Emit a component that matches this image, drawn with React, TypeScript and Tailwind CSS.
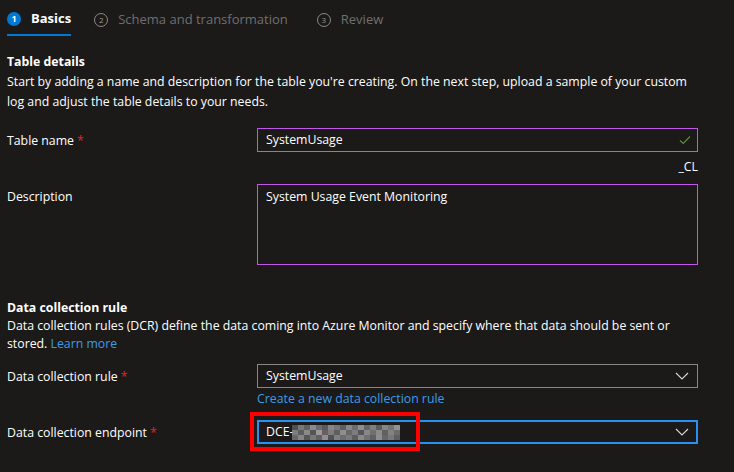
import React from 'react';

const font = { fontFamily: '"Open Sans", "Noto Sans", Arial, sans-serif' };

const blur = [
  ['#5a5a5a', '#8a8a8a', '#6e6e6e', '#a0a0a0', '#7a7a85', '#666', '#9a9a9a', '#888', '#6a6a70', '#9b9b9b', '#7c7c7c', '#a5a5a5', '#737373', '#909090', '#686868', '#999', '#858585', '#a8a8a8'],
  ['#8f8f8f', '#6a6a6a', '#9d9d9d', '#5f5f68', '#b0b0b0', '#7a6a70', '#909090', '#6c6c6c', '#a3a3a3', '#777', '#8e8e95', '#616161', '#9c9c9c', '#7f7f7f', '#a0a0a0', '#6d6d6d', '#959595', '#7b7b7b'],
  ['#777', '#9a9a9a', '#626262', '#8a8a8a', '#6f6f6f', '#a6a6a6', '#5d5d5d', '#939393', '#7c7c7c', '#8c8c8c', '#6a6a6a', '#9e9e9e', '#818181', '#6e6e6e', '#a2a2a2', '#747474', '#8a8a8a', '#6b6b6b'],
];

const Chevron = () => (
  <svg width="14" height="8" viewBox="0 0 14 8" className="shrink-0">
    <path d="M1 1 L7 7 L13 1" fill="none" stroke="#d6d6d6" strokeWidth="1.1" />
  </svg>
);

const Step = ({ n, label, active }: { n: number; label: string; active?: boolean }) => (
  <div
    className={
      'flex items-center gap-[10px] h-[36px] pt-[3px] ' +
      (active ? 'border-b-[2px] border-[#0078d4]' : '')
    }
  >
    {active ? (
      <span className="w-[14px] h-[14px] rounded-full bg-[#0078d4] text-white text-[9px] font-bold flex items-center justify-center leading-none">
        {n}
      </span>
    ) : (
      <span className="w-[14px] h-[14px] rounded-full border border-[#8a8a8a] text-[#9a9a9a] text-[8px] flex items-center justify-center leading-none">
        {n}
      </span>
    )}
    <span className={active ? 'text-[13px] font-bold text-white' : 'text-[13px] text-[#6f6f6f]'}>
      {label}
    </span>
  </div>
);

const Req = () => <span className="text-[#e3242b] ml-[3px]">*</span>;

export default function App() {
  return (
    <div
      className="w-[734px] h-[472px] bg-[#1b1a19] text-white text-[12.3px] overflow-hidden relative"
      style={font}
    >
      {/* wizard steps */}
      <div className="flex pl-[7px]">
        <Step n={1} label="Basics" active />
        <div className="ml-[23px]">
          <Step n={2} label="Schema and transformation" />
        </div>
        <div className="ml-[29px]">
          <Step n={3} label="Review" />
        </div>
      </div>

      <div className="px-[7px]">
        {/* Table details */}
        <div className="mt-[16px] leading-[20px]">
          <div className="font-bold">Table details</div>
          <p className="whitespace-nowrap">
            Start by adding a name and description for the table you're creating. On the next step, upload a sample of your custom
            <br />
            log and adjust the table details to your needs.
          </p>
        </div>

        <div className="mt-[16px] grid grid-cols-[250px_441px]">
          <div className="leading-[24px] pt-[1px]">
            Table name<Req />
          </div>
          <div>
            <div className="h-[24px] border border-[#c157e8] flex items-center justify-between pl-[8px] pr-[6px]">
              <span>SystemUsage</span>
              <svg width="12" height="10" viewBox="0 0 12 10">
                <path d="M1 5.5 L4.2 8.5 L11 1.5" fill="none" stroke="#5f8f3c" strokeWidth="1.1" />
              </svg>
            </div>
            <div className="text-right leading-[20px] mt-[5px]">_CL</div>
          </div>

          <div className="mt-[7px] leading-[24px] pt-[1px]">Description</div>
          <div className="mt-[7px] h-[81px] border border-[#c157e8] px-[8px] pt-[2px] leading-[20px]">
            System Usage Event Monitoring
          </div>
        </div>

        {/* Data collection rule */}
        <div className="mt-[34px] leading-[18px]">
          <div className="font-bold">Data collection rule</div>
          <p className="whitespace-nowrap">
            Data collection rules (DCR) define the data coming into Azure Monitor and specify where that data should be sent or
            <br />
            stored. <span className="text-[#3b9ae8]">Learn more</span>
          </p>
        </div>

        <div className="mt-[11px] grid grid-cols-[250px_441px]">
          <div className="leading-[24px] pt-[1px]">
            Data collection rule<Req />
          </div>
          <div>
            <div className="h-[24px] border border-[#8a8886] flex items-center justify-between pl-[8px] pr-[8px]">
              <span>SystemUsage</span>
              <Chevron />
            </div>
            <div className="text-[#3b9ae8] leading-[19px] mt-[1px]">Create a new data collection rule</div>
          </div>

          <div className="mt-[12px] leading-[24px] pt-[1px]">
            Data collection endpoint<Req />
          </div>
          <div className="mt-[12px] h-[24px] border-[2px] border-[#2a8ff0] flex items-center justify-between pl-[7px] pr-[7px]">
            <span className="flex items-center">
              DCE-
              <svg width="108" height="15" viewBox="0 0 108 15" className="ml-[-1px]">
                {blur.map((row, r) =>
                  row.map((c, i) => (
                    <rect key={r + '-' + i} x={i * 6} y={r * 5} width="6" height="5" fill={c} opacity="0.85" />
                  ))
                )}
              </svg>
            </span>
            <Chevron />
          </div>
        </div>
      </div>

      {/* highlight annotation */}
      <div className="absolute left-[250px] top-[412px] w-[170px] h-[39px] border-[4px] border-[#ff0000]" />
    </div>
  );
}
